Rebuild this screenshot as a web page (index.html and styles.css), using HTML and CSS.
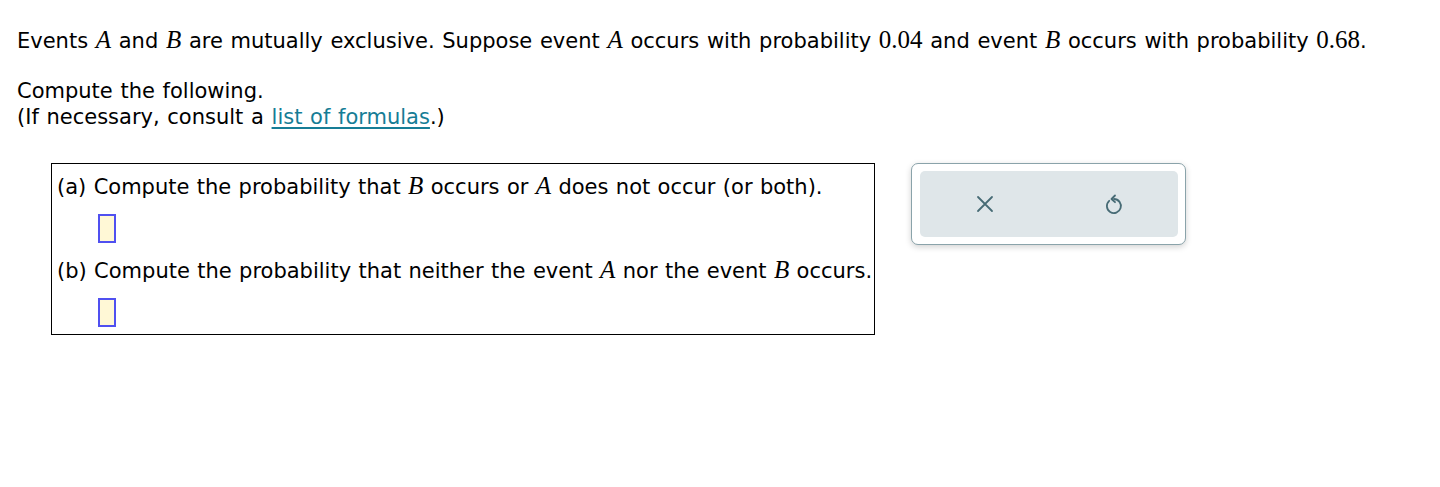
FILE: index.html
```html
<!DOCTYPE html>
<html>
<head>
<meta charset="utf-8">
<link rel="stylesheet" href="styles.css">
</head>
<body>
<div class="page">
  <p class="intro">Events <span class="m">A</span> and <span class="m">B</span> are mutually exclusive. Suppose event <span class="m">A</span> occurs with probability <span class="n">0.04</span> and event <span class="m">B</span> occurs with probability <span class="n">0.68</span>.</p>
  <p class="instr">Compute the following.<br>(If necessary, consult a <a class="link" href="#">list of formulas</a>.)</p>
  <div class="row">
    <div class="qbox">
      <div class="q">(a) Compute the probability that <span class="m">B</span> occurs or <span class="m">A</span> does not occur (or both).</div>
      <div class="ans"><span class="inp"></span></div>
      <div class="q">(b) Compute the probability that neither the event <span class="m">A</span> nor the event <span class="m">B</span> occurs.</div>
      <div class="ans last"><span class="inp"></span></div>
    </div>
    <div class="tools">
      <div class="toolbar">
        <button class="btn" aria-label="clear">
          <svg width="20" height="20" viewBox="0 0 20 20"><path d="M3 3 L17 17 M17 3 L3 17" stroke="#476b75" stroke-width="1.8" fill="none" stroke-linecap="round"/></svg>
        </button>
        <button class="btn" aria-label="undo">
          <svg width="22" height="22" viewBox="0 0 22 22"><path d="M6.2 7.8 A7 7 0 1 0 11 6" stroke="#476b75" stroke-width="1.8" fill="none" stroke-linecap="round"/><path d="M12 2.5 L8.5 6 L12 9.2" stroke="#476b75" stroke-width="1.8" fill="none" stroke-linecap="round" stroke-linejoin="round"/></svg>
        </button>
      </div>
    </div>
  </div>
</div>
</body>
</html>
```
FILE: styles.css
```css
html, body { margin: 0; padding: 0; background: #fff; }
body { font-family: "DejaVu Sans", Verdana, sans-serif; font-size: 21px; color: #000; word-spacing: 1px; }
.page { padding: 28px 0 0 17px; }
p { margin: 0; line-height: 26px; }
.intro { margin-bottom: 24px; }
.m { font-family: "Liberation Serif", "Times New Roman", serif; font-style: italic; font-size: 25px; line-height: 0; }
.n { font-family: "Liberation Serif", "Times New Roman", serif; font-size: 25px; line-height: 0; }
.link { color: #167d96; text-decoration: underline; text-underline-offset: 3px; }
.row { display: flex; align-items: flex-start; margin-top: 33px; margin-left: 34px; gap: 36px; }
.qbox { border: 1px solid #000; width: 811px; padding: 8px 6px 7px 5px; word-spacing: 0.7px; }
.q { line-height: 30px; white-space: nowrap; }
.ans { padding: 12px 0 13px 41px; }
.ans.last { padding-bottom: 0; }
.inp { display: block; width: 18px; height: 29px; box-sizing: border-box; border: 2px solid #5050f0; background: #fff8d6; }
.tools { width: 275px; height: 82px; box-sizing: border-box; border: 1px solid #8aa3aa; border-radius: 7px; padding: 7px 7px 7px 8px; box-shadow: 0 2px 6px rgba(0,0,0,0.18); background: #fff; }
.toolbar { display: flex; height: 66px; background: #dfe6e9; border-radius: 5px; }
.btn { flex: 1; border: 0; background: transparent; display: flex; align-items: center; justify-content: center; padding: 0; }
```
